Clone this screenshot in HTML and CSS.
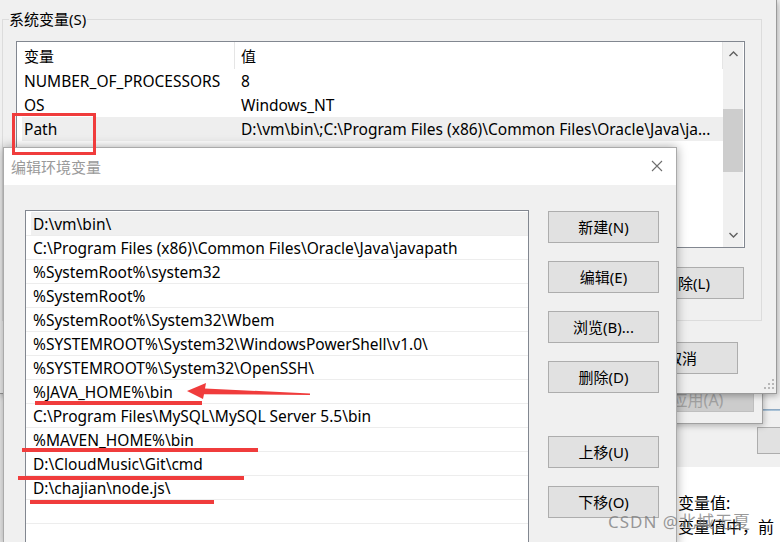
FILE: index.html
```html
<!DOCTYPE html>
<html lang="zh-CN">
<head>
<meta charset="utf-8">
<title>编辑环境变量</title>
<link rel="stylesheet" href="styles.css">
</head>
<body>
<div class="desk">

  <section class="win win-c">
    <div class="c-focus"></div>
    <div class="c-btnrow"><button class="btn c-btn" type="button" aria-label="确定"></button></div>
    <div class="c-panel">
      <p class="c-line">变量值:</p>
      <p class="c-line">变量值中，前</p>
    </div>
  </section>

  <section class="win win-b">
    <button class="btn btn-off" type="button">应用(A)</button>
  </section>

  <section class="win win-a">
    <fieldset class="group">
      <legend>系统变量(S)</legend>
      <div class="lv">
        <div class="lv-main">
          <div class="lv-head"><span class="h1">变量</span><span class="h2">值</span></div>
          <div class="lv-row"><span class="c1">NUMBER_OF_PROCESSORS</span><span class="c2">8</span></div>
          <div class="lv-row"><span class="c1">OS</span><span class="c2">Windows_NT</span></div>
          <div class="lv-row is-sel"><span class="c1">Path</span><span class="c2">D:\vm\bin\;C:\Program Files (x86)\Common Files\Oracle\Java\ja...</span></div>
        </div>
        <div class="sb">
          <div class="sb-btn"><svg width="9" height="6" viewBox="0 0 9 6"><path d="M0.5 5 L4.5 1 L8.5 5" fill="none" stroke="#606060" stroke-width="1.4"/></svg></div>
          <div class="sb-track"><div class="sb-thumb"></div></div>
          <div class="sb-btn"><svg width="9" height="6" viewBox="0 0 9 6"><path d="M0.5 1 L4.5 5 L8.5 1" fill="none" stroke="#606060" stroke-width="1.4"/></svg></div>
        </div>
      </div>
      <div class="btnrow">
        <button class="btn" type="button">删除(L)</button>
      </div>
    </fieldset>
    <div class="okrow">
      <button class="btn" type="button">取消</button>
    </div>
    <svg class="grip" width="14" height="12" viewBox="0 0 14 12">
      <rect x="11" y="0" width="2" height="2" fill="#b8b8b8"/>
      <rect x="7" y="4" width="2" height="2" fill="#b8b8b8"/>
      <rect x="11" y="4" width="2" height="2" fill="#b8b8b8"/>
      <rect x="3" y="8" width="2" height="2" fill="#b8b8b8"/>
      <rect x="7" y="8" width="2" height="2" fill="#b8b8b8"/>
      <rect x="11" y="8" width="2" height="2" fill="#b8b8b8"/>
    </svg>
  </section>

  <section class="dlg">
    <header class="dlg-title">
      <span>编辑环境变量</span>
      <svg class="dlg-close" width="12" height="12" viewBox="0 0 12 12"><path d="M1 1 L11 11 M11 1 L1 11" stroke="#6e6e6e" stroke-width="1.1" fill="none"/></svg>
    </header>
    <div class="dlg-body">
      <div class="plist">
        <div class="prow is-sel">D:\vm\bin\</div>
        <div class="prow">C:\Program Files (x86)\Common Files\Oracle\Java\javapath</div>
        <div class="prow">%SystemRoot%\system32</div>
        <div class="prow">%SystemRoot%</div>
        <div class="prow">%SystemRoot%\System32\Wbem</div>
        <div class="prow">%SYSTEMROOT%\System32\WindowsPowerShell\v1.0\</div>
        <div class="prow">%SYSTEMROOT%\System32\OpenSSH\</div>
        <div class="prow">%JAVA_HOME%\bin</div>
        <div class="prow">C:\Program Files\MySQL\MySQL Server 5.5\bin</div>
        <div class="prow">%MAVEN_HOME%\bin</div>
        <div class="prow">D:\CloudMusic\Git\cmd</div>
        <div class="prow">D:\chajian\node.js\</div>
        <div class="prow"></div>
        <div class="prow"></div>
        <div class="prow"></div>
      </div>
      <div class="pbtns">
        <button class="btn" type="button">新建(N)</button>
        <button class="btn" type="button">编辑(E)</button>
        <button class="btn" type="button">浏览(B)...</button>
        <button class="btn" type="button">删除(D)</button>
        <button class="btn btn-sep" type="button">上移(U)</button>
        <button class="btn" type="button">下移(O)</button>
      </div>
    </div>
  </section>

  <div class="mark mark-rect"></div>
  <div class="mark mark-line line-java"></div>
  <div class="mark mark-line line-maven"></div>
  <div class="mark mark-line line-git"></div>
  <div class="mark mark-line line-node"></div>
  <svg class="mark-arrow" width="128" height="20" viewBox="0 0 128 20">
    <polygon points="2,10 21,2 20,7.5 125,12.5 125,14 19,13.2 18,18" fill="#f03c3c"/>
  </svg>

  <div class="watermark">CSDN @北城无夏</div>
</div>
</body>
</html>
```

FILE: styles.css
```css
* { box-sizing: border-box; }
html, body { margin: 0; padding: 0; }
body {
  width: 780px;
  height: 542px;
  overflow: hidden;
  background: #f0f0f0;
  font-family: "Noto Sans", "Noto Sans CJK SC", sans-serif;
  font-size: 15px;
  color: #000;
}
.desk { position: relative; width: 780px; height: 542px; overflow: hidden; }

.btn {
  display: block;
  height: 32px;
  margin: 0;
  padding: 0;
  border: 1px solid #adadad;
  background: #e1e1e1;
  font-family: inherit;
  font-size: 15px;
  line-height: 30px;
  color: #000;
  text-align: center;
  white-space: nowrap;
}

/* ---------- windows in the back ---------- */
.win { position: absolute; background: #f0f0f0; }

.win-c {
  left: 500px;
  top: 395px;
  width: 300px;
  height: 160px;
  display: flex;
  flex-direction: column;
}
.c-focus {
  margin-top: 14px;
  height: 2px;
  background: linear-gradient(#7f9db9, #b9cfe0);
}
.c-btnrow { margin-top: 16px; padding-left: 257px; }
.c-btn { width: 100px; height: 27px; }
.c-panel {
  margin-top: 13px;
  flex: 1;
  background: #fff;
  padding: 24px 0 0 178px;
}
.c-line { margin: 0; font-size: 16px; line-height: 24px; white-space: nowrap; }

.win-b {
  left: 540px;
  top: 300px;
  width: 223px;
  height: 124px;
  border-right: 1px solid #a0a0a0;
  border-bottom: 1px solid #a0a0a0;
  box-shadow: 1px 2px 6px rgba(0, 0, 0, 0.25);
  display: flex;
  align-items: flex-end;
  justify-content: flex-end;
  padding: 0 8px 11px 0;
}
.btn-off {
  width: 113px;
  height: 23px;
  line-height: 21px;
  background: #cccccc;
  border-color: #bfbfbf;
  color: #a0a0a0;
  font-size: 16px;
}

/* ---------- environment variables window ---------- */
.win-a {
  left: 0;
  top: 0;
  width: 777px;
  height: 394px;
  border-right: 1px solid #9a9a9a;
  border-bottom: 1px solid #9a9a9a;
  box-shadow: 1px 2px 6px rgba(0, 0, 0, 0.28);
}
.group {
  margin: 9px 14px 0 2px;
  padding: 0 16px 21px 6px;
  border: 1px solid #dcdcdc;
  min-width: 0;
}
.group legend { padding: 0 1px 0 0; font-size: 15px; line-height: 20px; }

.lv {
  margin: 12px 0 0 7px;
  height: 207px;
  border: 1px solid #828790;
  background: #fff;
  display: flex;
}
.lv-main { flex: 1; min-width: 0; overflow: hidden; }
.lv-head { height: 27px; display: flex; }
.lv-head span { display: flex; align-items: center; }
.h1 { width: 218px; padding-left: 7px; border-right: 1px solid #e5e5e5; }
.h2 { flex: 1; padding-left: 6px; border-right: 1px solid #e5e5e5; }
.lv-row {
  height: 24px;
  margin-left: 5px;
  padding-top: 1px;
  display: flex;
  font-size: 15.5px;
  line-height: 23px;
  white-space: nowrap;
}
.lv-row.is-sel { background: #eeeeee; }
.c1 { width: 213px; padding-left: 2px; overflow: hidden; }
.c2 { flex: 1; padding-left: 6px; overflow: hidden; }

.sb {
  width: 21px;
  border-right: 1px solid #fff;
  background: #f0f0f0;
  display: flex;
  flex-direction: column;
}
.sb-btn { height: 24px; display: flex; align-items: center; justify-content: center; }
.sb-btn svg { display: block; }
.sb-track { flex: 1; }
.sb-thumb { margin-top: 43px; height: 63px; background: #cdcdcd; }

.btnrow {
  margin: 19px 1px 0 0;
  display: flex;
  justify-content: flex-end;
}
.btnrow .btn { width: 115px; }

.okrow {
  margin: 21px 38px 0 0;
  display: flex;
  justify-content: flex-end;
}
.okrow .btn { width: 112px; }

.grip { position: absolute; right: 1px; bottom: 2px; }

/* ---------- edit dialog ---------- */
.dlg {
  position: absolute;
  left: 3px;
  top: 147px;
  width: 674px;
  height: 400px;
  border: 1px solid #aaaaaa;
  background: #f0f0f0;
  box-shadow: 0 0 10px rgba(0, 0, 0, 0.35);
  display: flex;
  flex-direction: column;
}
.dlg-title {
  height: 37px;
  flex: none;
  background: #fff;
  display: flex;
  align-items: center;
  justify-content: space-between;
  padding: 0 13px 1px 7px;
  color: #9a9a9a;
  font-size: 15px;
}
.dlg-close { display: block; }
.dlg-body {
  flex: 1;
  min-height: 0;
  display: flex;
  align-items: flex-start;
  gap: 19px;
  padding: 25px 16px 0 21px;
}
.plist {
  flex: none;
  width: 504px;
  height: 360px;
  border: 1px solid #828790;
  background: #fff;
  padding-top: 1px;
  overflow: hidden;
}
.prow {
  height: 24px;
  border-bottom: 1px solid #ededed;
  padding: 1px 0 0 7px;
  font-size: 15.5px;
  line-height: 23px;
  white-space: nowrap;
}
.prow.is-sel { background: linear-gradient(to right, transparent 5px, #f0f0f0 5px); }

.pbtns {
  flex: none;
  width: 111px;
  padding-top: 1px;
  display: flex;
  flex-direction: column;
}
.pbtns .btn { width: 111px; }
.pbtns .btn + .btn { margin-top: 18px; }
.pbtns .btn.btn-sep { margin-top: 43px; }

/* ---------- red annotations ---------- */
.mark { position: absolute; }
.mark-rect {
  left: 12px;
  top: 113px;
  width: 84px;
  height: 42px;
  border: 3px solid #f03c3c;
}
.mark-line { height: 4px; background: #f03c3c; }
.line-java { left: 35px; top: 401px; width: 167px; }
.line-maven { left: 22px; top: 448px; width: 236px; }
.line-git { left: 18px; top: 476px; width: 226px; }
.line-node { left: 30px; top: 500px; width: 184px; }
.mark-arrow { position: absolute; left: 185px; top: 381px; }

.watermark {
  position: absolute;
  left: 608px;
  top: 510px;
  font-size: 17px;
  line-height: 24px;
  letter-spacing: 1px;
  color: rgba(120, 120, 120, 0.75);
  white-space: nowrap;
}
```
